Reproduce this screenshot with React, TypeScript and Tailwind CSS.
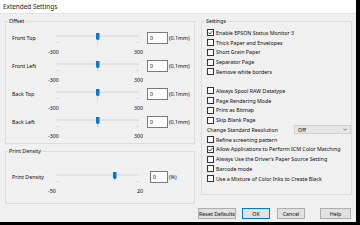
const offsets = ['Front Top', 'Front Left', 'Back Top', 'Back Left']

const Slider = ({ pos, ticks }: { pos: number; ticks: number[] }) => (
  <svg width="83" height="12" viewBox="0 0 83 12" className="shrink-0">
    <rect x="0" y="3" width="83" height="2" fill="#e2e2e2" />
    {ticks.map((t) => (
      <rect key={t} x={t} y="10" width="1" height="1" fill="#b5b5b5" />
    ))}
    <path d={`M${pos - 1.5} 1 h3.5 v6 l-1.75 1.5 l-1.75 -1.5 z`} fill="#0078d7" />
  </svg>
)

const SliderRow = ({
  label,
  pos,
  ticks,
  unit,
  min,
  max,
  inputGap,
}: {
  label: string
  pos: number
  ticks: number[]
  unit: string
  min: string
  max: string
  inputGap: string
}) => (
  <div className="flex flex-col">
    <div className="flex h-[12px] items-center pl-[6px]">
      <span className="w-[44px] shrink-0">{label}</span>
      <Slider pos={pos} ticks={ticks} />
      <div className={`${inputGap} flex h-[12px] shrink-0 items-center border border-[#7a7a7a] bg-white pl-[2px]`}>0</div>
      <span className="ml-[1px] whitespace-nowrap">{unit}</span>
    </div>
    <div className="flex h-[16px] items-center">
      <div className="ml-[42px] flex w-[95px] justify-between">
        <span>{min}</span>
        <span>{max}</span>
      </div>
    </div>
  </div>
)

const Check = ({ label, checked }: { label: string; checked?: boolean }) => (
  <div className="flex h-[9.75px] items-center pl-[5px]">
    <span className="flex h-[7px] w-[7px] shrink-0 items-center justify-center border border-[#333] bg-white">
      {checked && (
        <svg width="5" height="5" viewBox="0 0 5 5">
          <path d="M0.5 2.6 L1.9 4 L4.6 0.9" fill="none" stroke="#222" strokeWidth="0.8" />
        </svg>
      )}
    </span>
    <span className="ml-[2px] whitespace-nowrap">{label}</span>
  </div>
)

const Btn = ({ label, w, primary }: { label: string; w: string; primary?: boolean }) => (
  <button
    className={`${w} flex h-[11px] items-center justify-center border bg-[#e1e1e1] ${
      primary ? 'border-[#0078d7]' : 'border-[#adadad]'
    }`}
  >
    {label}
  </button>
)

export default function App() {
  return (
    <div className="h-[225px] w-[360px] bg-black font-['Noto_Sans',sans-serif] text-[5.3px] leading-[6px] text-[#0a0a0a]">
      <div className="flex h-[222px] w-[356px] flex-col bg-[#f0f0f0]">
        <div className="flex h-[14px] shrink-0 items-center border-b border-[#e3e3e3] bg-white pl-[3px] text-[6.4px] text-[#222]">
          Extended Settings
        </div>
        <div className="flex px-[5px] pt-[4px]">
          <div className="flex w-[190px] shrink-0 flex-col">
            <fieldset className="h-[126px] border border-[#dcdcdc]">
              <legend className="ml-[2px] px-[1px]">Offset</legend>
              <div className="mt-[8px] flex flex-col">
                {offsets.map((o) => (
                  <SliderRow
                    key={o}
                    label={o}
                    pos={41.5}
                    ticks={[1, 41, 81]}
                    unit="(0.1mm)"
                    min="-300"
                    max="300"
                    inputGap="ml-[8px] w-[21px]"
                  />
                ))}
              </div>
            </fieldset>
            <fieldset className="mt-[4px] h-[56px] border border-[#dcdcdc]">
              <legend className="ml-[2px] px-[1px]">Print Density</legend>
              <div className="mt-[17px] flex flex-col">
                <SliderRow
                  label="Print Density"
                  pos={58.5}
                  ticks={[1, 81]}
                  unit="(%)"
                  min="-50"
                  max="20"
                  inputGap="ml-[11px] w-[18px]"
                />
              </div>
            </fieldset>
          </div>
          <fieldset className="ml-[6px] h-[177px] w-[153px] border border-[#dcdcdc]">
            <legend className="ml-[3px] px-[1px]">Settings</legend>
            <div className="mt-[4px] flex flex-col">
              <Check label="Enable EPSON Status Monitor 3" checked />
              <Check label="Thick Paper and Envelopes" />
              <Check label="Short Grain Paper" />
              <Check label="Separator Page" />
              <Check label="Remove white borders" />
              <div className="h-[9.25px]" />
              <Check label="Always Spool RAW Datatype" />
              <Check label="Page Rendering Mode" />
              <Check label="Print as Bitmap" />
              <Check label="Skip Blank Page" />
              <div className="flex h-[9.75px] items-center pl-[5px]">
                <span className="w-[87px] whitespace-nowrap">Change Standard Resolution</span>
                <div className="flex h-[9px] w-[57px] items-center justify-between border border-[#cfcfcf] bg-[#e6e6e6] pl-[3px] pr-[3px]">
                  <span>Off</span>
                  <svg width="4" height="3" viewBox="0 0 4 3">
                    <path d="M0.3 0.6 L2 2.3 L3.7 0.6" fill="none" stroke="#555" strokeWidth="0.7" />
                  </svg>
                </div>
              </div>
              <Check label="Refine screening pattern" />
              <Check label="Allow Applications to Perform ICM Color Matching" checked />
              <Check label="Always Use the Driver's Paper Source Setting" />
              <Check label="Barcode mode" />
              <Check label="Use a Mixture of Color Inks to Create Black" />
            </div>
          </fieldset>
        </div>
        <div className="mt-[4px] flex pl-[198px]">
          <Btn label="Reset Defaults" w="w-[38px]" />
          <div className="ml-[6px]">
            <Btn label="OK" w="w-[28px]" primary />
          </div>
          <div className="ml-[7px]">
            <Btn label="Cancel" w="w-[28px]" />
          </div>
          <div className="ml-[15px]">
            <Btn label="Help" w="w-[31px]" />
          </div>
        </div>
      </div>
    </div>
  )
}
